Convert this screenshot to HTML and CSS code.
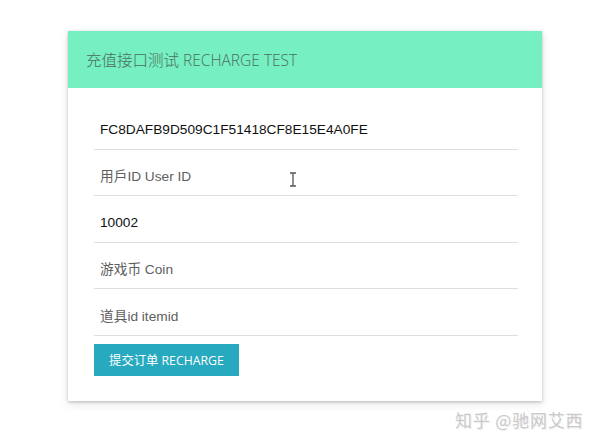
FILE: index.html
```html
<!DOCTYPE html>
<html lang="zh-CN">
<head>
    <meta charset="UTF-8"/>
    <title>充值接口测试</title>
    <link rel="stylesheet" href="styles.css">
</head>
<body>
    <div class="page">
        <form class="card" onsubmit="return false">
            <div class="card_head">充值接口测试 RECHARGE TEST</div>
            <div class="card_body">
                <input class="field" type="text" name="token" value="FC8DAFB9D509C1F51418CF8E15E4A0FE"/>
                <input class="field" type="text" name="user_id" placeholder="用戶ID User ID"/>
                <input class="field" type="text" name="server" value="10002"/>
                <input class="field" type="text" name="coin" placeholder="游戏币 Coin"/>
                <input class="field" type="text" name="itemid" placeholder="道具id itemid"/>
                <button class="btn_submit" type="submit">提交订单 RECHARGE</button>
            </div>
        </form>
        <div class="foot">
            <span class="watermark">知乎 @驰网艾西</span>
        </div>
    </div>
    <svg class="cursor" width="8" height="15" viewBox="0 0 8 15">
        <path d="M1 1h6M4 1v13M1 14h6" stroke="#555" stroke-width="1.3" fill="none"/>
    </svg>
</body>
</html>
```
FILE: styles.css
```css
html, body {
    height: 100%;
}

body {
    margin: 0;
    background: #fff;
    font-family: "Liberation Sans", "Noto Sans CJK SC", sans-serif;
}

.page {
    padding: 31px 0 0 68px;
}

.card {
    width: 474px;
    background: #fff;
    box-shadow: 0 1px 3px rgba(0, 0, 0, 0.22), 0 3px 9px rgba(0, 0, 0, 0.1);
}

.card_head {
    height: 57px;
    box-sizing: border-box;
    padding: 17px 0 0 18px;
    background: #76efc1;
    color: #4d6d5f;
    font-family: "Open Sans", "Noto Sans CJK SC", sans-serif;
    font-weight: 300;
    font-size: 15.5px;
}

.card_body {
    display: flex;
    flex-direction: column;
    align-items: flex-start;
    padding: 15px 24px 25px 26px;
}

.field {
    width: 424px;
    height: 46.6px;
    box-sizing: border-box;
    border: none;
    border-bottom: 1px solid #dedede;
    padding: 8px 0 0 6px;
    font-family: "Liberation Sans", "Noto Sans CJK SC", sans-serif;
    font-size: 13.7px;
    color: #111;
    outline: none;
    background: transparent;
}

.field::placeholder {
    color: #5e5e5e;
}

.btn_submit {
    margin-top: 8px;
    width: 145px;
    height: 32px;
    border: none;
    background: #27aabf;
    color: #fff;
    font-family: "Open Sans", "Noto Sans CJK SC", sans-serif;
    font-size: 12.3px;
    padding: 0;
}

.foot {
    padding: 6px 0 0 387px;
    height: 36px;
}

.watermark {
    font-family: "Noto Sans CJK SC", sans-serif;
    font-size: 17px;
    letter-spacing: 0.8px;
    color: #cacaca;
    text-shadow: 1px 1px 1px #eee;
}

.cursor {
    position: absolute;
    left: 289px;
    top: 172px;
}
```
